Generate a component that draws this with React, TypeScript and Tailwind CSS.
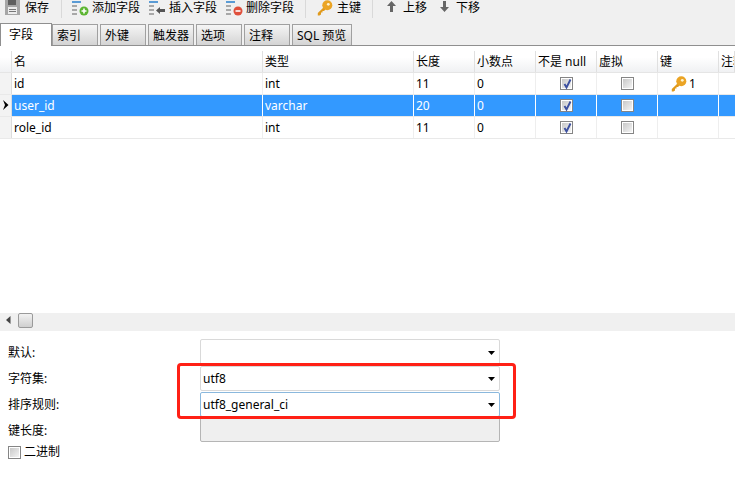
import React from 'react'

const font = "font-['Tahoma','Noto_Sans','Noto_Sans_CJK_SC',sans-serif]"

const ListIcon = ({ children }: { children: React.ReactNode }) => (
  <svg width="17" height="17" viewBox="0 0 17 17" className="shrink-0">
    <rect x="0" y="1" width="9" height="2" fill="#5a9bd5" />
    <rect x="0" y="5" width="5" height="2" fill="#a8a8a8" />
    <rect x="0" y="9" width="5" height="2" fill="#a8a8a8" />
    <rect x="0" y="13" width="5" height="2" fill="#a8a8a8" />
    {children}
  </svg>
)

const KeyIcon = ({ size = 16 }: { size?: number }) => (
  <svg width={size} height={size} viewBox="0 0 16 16" className="shrink-0">
    <path d="M0.8 13 L6.5 7.5 L8.5 9.5 L7 11 H5.5 V12.5 H4 V14.5 L2.5 15.5 H0.8 Z" fill="#e09a1c" />
    <circle cx="10.3" cy="5.3" r="5" fill="#eba424" />
    <circle cx="11.3" cy="4.3" r="1.4" fill="#fff3cf" />
  </svg>
)

const Sep = ({ className }: { className: string }) => <div className={`w-px h-[18px] bg-[#d9d9d9] shrink-0 ${className}`} />

const Toolbar = () => (
  <div className="flex items-start h-[23px] text-[12px] text-black leading-[15px]">
    <svg width="15" height="15" viewBox="0 0 15 15" className="ml-[5px] shrink-0">
      <rect x="0" y="0" width="15" height="15" fill="#a6a6a6" />
      <rect x="3" y="0" width="8" height="5" fill="#5f5f5f" />
      <rect x="3" y="7" width="9" height="7" fill="#ececec" />
      <rect x="4" y="9" width="7" height="1" fill="#777" />
      <rect x="4" y="11" width="7" height="1" fill="#777" />
    </svg>
    <span className="ml-[5px] w-[24px]">保存</span>
    <Sep className="ml-[12px]" />
    <div className="ml-[10px] flex gap-[3px]">
      <ListIcon>
        <circle cx="12" cy="11" r="4.5" fill="#5cb531" />
        <path d="M9.5 11 H14.5 M12 8.5 V13.5" stroke="#fff" strokeWidth="1.6" />
      </ListIcon>
      <span className="w-[48px]">添加字段</span>
    </div>
    <div className="ml-[9px] flex gap-[3px]">
      <ListIcon>
        <path d="M7 10.5 L11 7 V9 H16 V12 H11 V14 Z" fill="#555" />
      </ListIcon>
      <span className="w-[48px]">插入字段</span>
    </div>
    <div className="ml-[9px] flex gap-[3px]">
      <ListIcon>
        <circle cx="12" cy="11" r="4.5" fill="#e0503c" />
        <path d="M9.5 11 H14.5" stroke="#fff" strokeWidth="1.6" />
      </ListIcon>
      <span className="w-[48px]">删除字段</span>
    </div>
    <Sep className="ml-[11px]" />
    <div className="ml-[11px] flex gap-[4px]">
      <KeyIcon />
      <span className="w-[24px]">主键</span>
    </div>
    <Sep className="ml-[11px]" />
    <div className="ml-[13px] flex gap-[6px]">
      <svg width="11" height="13" viewBox="0 0 11 13" className="shrink-0">
        <path d="M5.5 1 L10 6 H7 V12 H4 V6 H1 Z" fill="#666" />
      </svg>
      <span className="w-[24px]">上移</span>
    </div>
    <div className="ml-[12px] flex gap-[6px]">
      <svg width="11" height="13" viewBox="0 0 11 13" className="shrink-0">
        <path d="M5.5 12 L10 7 H7 V1 H4 V7 H1 Z" fill="#666" />
      </svg>
      <span className="w-[24px]">下移</span>
    </div>
  </div>
)

const tabs = [
  ['索引', 'w-[46px]'],
  ['外键', 'w-[46px]'],
  ['触发器', 'w-[46px]'],
  ['选项', 'w-[46px]'],
  ['注释', 'w-[46px]'],
  ['SQL 预览', 'w-[60px]'],
]

const Tabs = () => (
  <div className="flex items-end h-[23px] border-b border-[#8f8f8f] text-[12px] text-black">
    <div className="w-[52px] h-[23px] -mb-px pt-[1px] pl-[8px] bg-white border border-b-0 border-[#8f8f8f] leading-[20px] z-10 relative">
      字段
    </div>
    {tabs.map(([label, w]) => (
      <div
        key={label}
        className={`${w} h-[21px] mr-[2px] pl-[4px] border border-b-0 border-[#a0a0a0] bg-gradient-to-b from-[#f5f5f5] to-[#d4d4d4] leading-[21px] whitespace-nowrap`}
      >
        {label}
      </div>
    ))}
  </div>
)

const cols = 'grid grid-cols-[12px_251px_151px_61px_61px_61px_61px_61px_1fr]'

const Check = ({ checked = false, className = 'mx-auto' }: { checked?: boolean; className?: string }) => (
  <div className={`w-[13px] h-[13px] shrink-0 border border-[#858585] p-px bg-white ${className}`}>
    <div className="relative w-full h-full bg-gradient-to-br from-[#c8c8c8] to-[#f4f4f4]">
      {checked && (
        <svg width="11" height="11" viewBox="0 0 11 11" className="absolute inset-0">
          <path d="M2.5 5 L4.5 8.5 L8.5 0.5" fill="none" stroke="#3c50a0" strokeWidth="1.9" />
        </svg>
      )}
    </div>
  </div>
)

const headers = ['名', '类型', '长度', '小数点', '不是 null', '虚拟', '键', '注释']

const Header = () => (
  <div className={`${cols} h-[22px] mt-[5px] border-b border-[#e5e5e5] bg-gradient-to-b from-white from-30% to-[#f0f1f3] text-[12px] text-black`}>
    <div className="border-r border-[#e0e0e0]" />
    {headers.map(h => (
      <div key={h} className="pl-[2px] border-r border-[#e0e0e0] leading-[22px] whitespace-nowrap overflow-hidden">
        {h}
      </div>
    ))}
  </div>
)

type RowProps = {
  name: string
  type: string
  len: string
  selected?: boolean
  primary?: boolean
}

const Row = ({ name, type, len, selected, primary }: RowProps) => {
  const line = selected ? 'border-white' : 'border-[#eeeeee]'
  const cell = `pl-[2px] border-r ${line} leading-[21px]`
  return (
    <div className={`${cols} h-[22px] border-b border-[#e9e9e9] text-[12px] ${selected ? 'bg-[#3399ff] text-white' : 'bg-white text-black'}`}>
      <div className="relative bg-[#f3f3f3] border-r border-[#dcdcdc]">
        {selected && (
          <svg width="6" height="10" viewBox="0 0 6 10" className="absolute left-[3px] top-[5px]">
            <path d="M0 0 L5.5 5 L0 10 L2 5 Z" fill="#000" />
          </svg>
        )}
      </div>
      <div className={cell}>{name}</div>
      <div className={cell}>{type}</div>
      <div className={cell}>{len}</div>
      <div className={cell}>0</div>
      <div className={`flex items-center border-r ${line}`}><Check checked /></div>
      <div className={`flex items-center border-r ${line}`}><Check /></div>
      <div className={`flex items-center gap-[2px] pl-[13px] border-r ${line}`}>
        {primary && (
          <>
            <KeyIcon size={16} />
            <span>1</span>
          </>
        )}
      </div>
      <div />
    </div>
  )
}

const Scrollbar = () => (
  <div className="h-[18px] bg-[#f0f0f0] flex items-start">
    <svg width="5" height="8" viewBox="0 0 5 8" className="ml-[6px] mt-[3px]">
      <path d="M4.5 0 L0 4 L4.5 8 Z" fill="#444" />
    </svg>
    <div className="ml-[7px] w-[15px] h-[15px] rounded-[2px] border border-[#9a9a9a] bg-gradient-to-b from-[#f2f2f2] to-[#cfcfcf]" />
  </div>
)

const Combo = ({ value, focus, className = '' }: { value?: string; focus?: boolean; className?: string }) => (
  <div className={`w-[300px] flex items-center justify-between pl-[2px] pr-[4px] border rounded-[2px] bg-white text-[12px] text-black ${focus ? 'border-[#8ab8dd]' : 'border-[#d9d9d9]'} ${className}`}>
    <span>{value}</span>
    <svg width="7" height="4" viewBox="0 0 7 4">
      <path d="M0 0 H7 L3.5 4 Z" fill="#000" />
    </svg>
  </div>
)

const Form = () => (
  <div className="relative pt-[8px] text-[12px] text-black">
    <div className="grid grid-cols-[200px_300px] gap-y-px">
      <div className="pl-[8px] flex items-center pt-[1px]">默认:</div>
      <Combo className="h-[26px] pt-[2px] border-[#b5b5b5]" />
      <div className="pl-[8px] flex items-center pt-[1px]">字符集:</div>
      <Combo className="h-[25px]" value="utf8" />
      <div className="pl-[8px] flex items-center pt-[1px]">排序规则:</div>
      <Combo className="h-[25px]" value="utf8_general_ci" focus />
      <div className="pl-[8px] flex items-center pt-[1px]">键长度:</div>
      <div className="h-[25px] -mt-px bg-[#efefef] border border-[#b5b5b5] rounded-b-[2px]" />
    </div>
    <div className="mt-[1px] pl-[8px] flex items-center gap-[3px]">
      <Check className="" />
      <span>二进制</span>
    </div>
    <div className="absolute left-[177px] top-[32px] w-[339px] h-[56px] border-[3px] border-[#ff2015] rounded-[4px]" />
  </div>
)

export default function App() {
  return (
    <div className={`w-[735px] h-[483px] overflow-hidden bg-white flex flex-col ${font}`}>
      <div className="bg-[#f0f0f0]">
        <Toolbar />
        <Tabs />
      </div>
      <Header />
      <Row name="id" type="int" len="11" primary />
      <Row name="user_id" type="varchar" len="20" selected />
      <Row name="role_id" type="int" len="11" />
      <div className="flex-1" />
      <Scrollbar />
      <div className="h-[152px]">
        <Form />
      </div>
    </div>
  )
}
